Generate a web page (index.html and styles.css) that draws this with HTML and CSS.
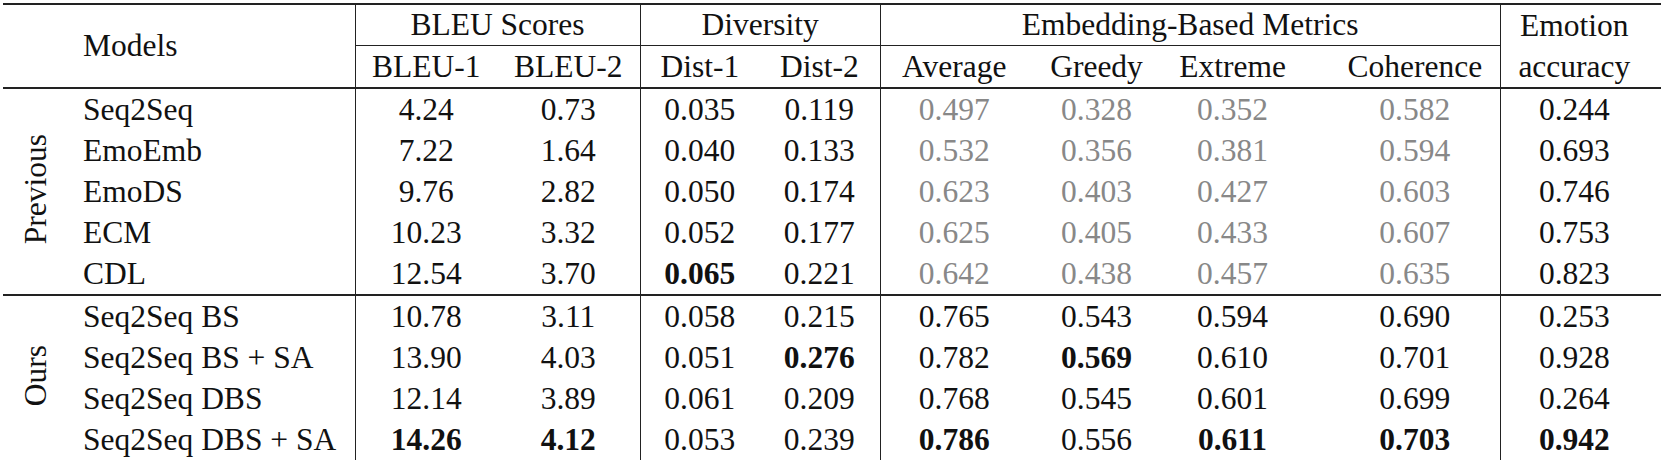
FILE: index.html
```html
<!DOCTYPE html>
<html>
<head>
<meta charset="utf-8">
<link rel="stylesheet" href="styles.css">
</head>
<body>
<table class="results">
  <colgroup>
    <col class="c-group"><col class="c-model">
    <col class="c-b1"><col class="c-b2">
    <col class="c-d1"><col class="c-d2">
    <col class="c-avg"><col class="c-gre"><col class="c-ext"><col class="c-coh">
    <col class="c-emo">
  </colgroup>
  <thead>
    <tr class="h1">
      <th colspan="2" rowspan="2" class="models-head vr">Models</th>
      <th colspan="2" class="vr mid">BLEU Scores</th>
      <th colspan="2" class="vr mid">Diversity</th>
      <th colspan="4" class="vr mid">Embedding-Based Metrics</th>
      <th rowspan="2" class="emo emo-head">Emotion<br>accuracy</th>
    </tr>
    <tr class="h2">
      <th>BLEU-1</th><th class="vr">BLEU-2</th>
      <th>Dist-1</th><th class="vr">Dist-2</th>
      <th>Average</th><th>Greedy</th><th>Extreme</th><th class="vr coh">Coherence</th>
    </tr>
  </thead>
  <tbody class="grp">
    <tr>
      <td rowspan="5" class="glabel"><span class="vtext">Previous</span></td>
      <td class="model vr">Seq2Seq</td>
      <td>4.24</td><td class="vr">0.73</td>
      <td>0.035</td><td class="vr">0.119</td>
      <td class="muted">0.497</td><td class="muted">0.328</td><td class="muted">0.352</td><td class="muted vr coh">0.582</td>
      <td class="emo">0.244</td>
    </tr>
    <tr>
      <td class="model vr">EmoEmb</td>
      <td>7.22</td><td class="vr">1.64</td>
      <td>0.040</td><td class="vr">0.133</td>
      <td class="muted">0.532</td><td class="muted">0.356</td><td class="muted">0.381</td><td class="muted vr coh">0.594</td>
      <td class="emo">0.693</td>
    </tr>
    <tr>
      <td class="model vr">EmoDS</td>
      <td>9.76</td><td class="vr">2.82</td>
      <td>0.050</td><td class="vr">0.174</td>
      <td class="muted">0.623</td><td class="muted">0.403</td><td class="muted">0.427</td><td class="muted vr coh">0.603</td>
      <td class="emo">0.746</td>
    </tr>
    <tr>
      <td class="model vr">ECM</td>
      <td>10.23</td><td class="vr">3.32</td>
      <td>0.052</td><td class="vr">0.177</td>
      <td class="muted">0.625</td><td class="muted">0.405</td><td class="muted">0.433</td><td class="muted vr coh">0.607</td>
      <td class="emo">0.753</td>
    </tr>
    <tr>
      <td class="model vr">CDL</td>
      <td>12.54</td><td class="vr">3.70</td>
      <td class="best">0.065</td><td class="vr">0.221</td>
      <td class="muted">0.642</td><td class="muted">0.438</td><td class="muted">0.457</td><td class="muted vr coh">0.635</td>
      <td class="emo">0.823</td>
    </tr>
  </tbody>
  <tbody class="grp ours">
    <tr>
      <td rowspan="4" class="glabel"><span class="vtext">Ours</span></td>
      <td class="model vr">Seq2Seq BS</td>
      <td>10.78</td><td class="vr">3.11</td>
      <td>0.058</td><td class="vr">0.215</td>
      <td>0.765</td><td>0.543</td><td>0.594</td><td class="vr coh">0.690</td>
      <td class="emo">0.253</td>
    </tr>
    <tr>
      <td class="model vr">Seq2Seq BS + SA</td>
      <td>13.90</td><td class="vr">4.03</td>
      <td>0.051</td><td class="vr best">0.276</td>
      <td>0.782</td><td class="best">0.569</td><td>0.610</td><td class="vr coh">0.701</td>
      <td class="emo">0.928</td>
    </tr>
    <tr>
      <td class="model vr">Seq2Seq DBS</td>
      <td>12.14</td><td class="vr">3.89</td>
      <td>0.061</td><td class="vr">0.209</td>
      <td>0.768</td><td>0.545</td><td>0.601</td><td class="vr coh">0.699</td>
      <td class="emo">0.264</td>
    </tr>
    <tr class="last">
      <td class="model vr">Seq2Seq DBS + SA</td>
      <td class="best">14.26</td><td class="vr best">4.12</td>
      <td>0.053</td><td class="vr">0.239</td>
      <td class="best">0.786</td><td>0.556</td><td class="best">0.611</td><td class="vr coh best">0.703</td>
      <td class="emo best">0.942</td>
    </tr>
  </tbody>
</table>
</body>
</html>
```

FILE: styles.css
```css
html, body {
  margin: 0;
  padding: 0;
  background: #ffffff;
  font-family: "Liberation Serif", serif;
}

.results {
  margin: 3px 0 0 3px;
  width: 1658px;
  table-layout: fixed;
  border-collapse: collapse;
  font-family: "Liberation Serif", serif;
  font-size: 31.5px;
  color: #111111;
  border-top: 2px solid #222222;
  border-bottom: 2px solid #222222;
}

.c-group { width: 65px; }
.c-model { width: 287px; }
.c-b1 { width: 142px; }
.c-b2 { width: 143px; }
.c-d1 { width: 119px; }
.c-d2 { width: 121px; }
.c-avg { width: 148px; }
.c-gre { width: 137px; }
.c-ext { width: 135px; }
.c-coh { width: 200px; }
.c-emo { width: 161px; }

.results th,
.results td {
  padding: 0;
  text-align: center;
  vertical-align: middle;
  font-weight: normal;
  font-family: "Liberation Serif", serif;
  font-size: 31.5px;
  white-space: nowrap;
  line-height: 1;
}

.results .h1 th { height: 40px; }
.results .h2 th { height: 41px; }
.results tbody td { height: 41px; }

.results .vr { border-right: 1px solid #222222; }
.results .mid { border-bottom: 1px solid #222222; }

.results thead { border-bottom: 2px solid #222222; }
.results tbody.ours { border-top: 2px solid #222222; }

.results .models-head {
  text-align: left;
  padding-left: 80px;
}

.results .emo { padding-right: 13px; }
.results .emo-head { line-height: 41px; }

.results .coh { padding-left: 30px; }

.results .model {
  text-align: left;
  padding-left: 15px;
}

.results .glabel { padding: 0; }

.vtext {
  display: inline-block;
  writing-mode: vertical-rl;
  transform: rotate(180deg);
  line-height: 1;
}

.results .muted { color: #888888; }
.results .best { font-weight: bold; }
```
